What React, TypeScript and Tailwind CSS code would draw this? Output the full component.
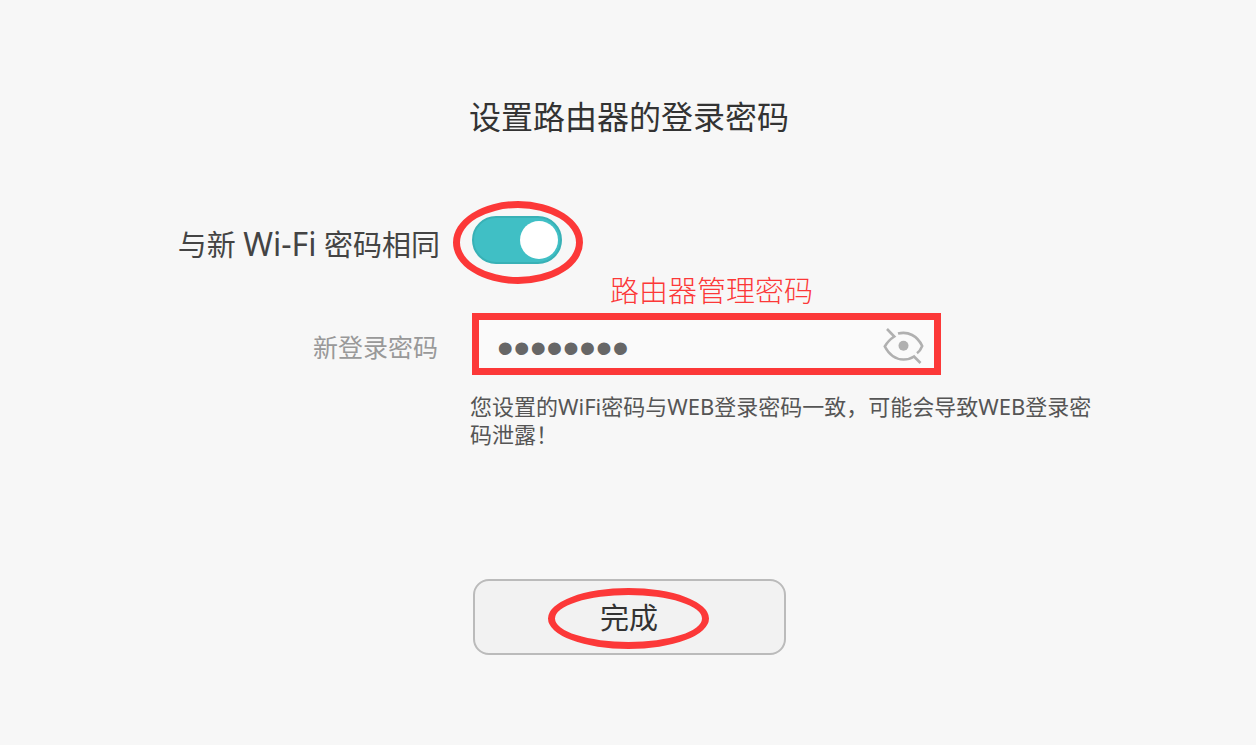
import { useState } from "react";

function EyeOffIcon() {
  return (
    <svg viewBox="0 0 44 40" className="h-10 w-11" fill="none" stroke="#b0b0b0" strokeWidth="2.6" aria-hidden="true">
      <path d="M6 5 L13.3 12.5 C9.5 15 6 18.5 3.8 22.5 C8 30.5 15 35.5 22.5 35.5 C26.5 35.5 30 34.5 33 32.5 L39.5 39" />
      <path d="M17 9.6 C27 6.8 36.5 12 41.2 22 C40 25 38.5 27.5 36 29.3" />
      <circle cx="22.5" cy="21.8" r="5" fill="#b0b0b0" stroke="none" />
    </svg>
  );
}

export default function App() {
  const [same, setSame] = useState(true);
  const [password, setPassword] = useState("12345678");
  const [visible, setVisible] = useState(false);

  return (
    <main className="min-h-screen bg-[#f7f7f7] pt-[93px] pb-[90px] pl-0.5 font-['Noto_Sans','Noto_Sans_CJK_SC',sans-serif] text-[#333]">
      <h1 className="text-center text-[32px] leading-[48px]">设置路由器的登录密码</h1>

      <form onSubmit={(e) => e.preventDefault()}>
        <div className="mx-auto mt-[75px] grid max-w-[930px] grid-cols-[276px_1fr] gap-x-[30px]">
          <label htmlFor="same" className="h-12 text-right text-[29px] leading-[56px] whitespace-nowrap text-[#444]">
            与新 <span className="text-[32px]">Wi-Fi</span> 密码相同
          </label>
          <div className="pl-0.5">
            <div className="relative h-12 w-[90px]">
              <input
                id="same"
                type="checkbox"
                role="switch"
                checked={same}
                onChange={(e) => setSame(e.target.checked)}
                className="peer block h-12 w-[90px] cursor-pointer appearance-none rounded-full border-2 border-[#bbb] bg-[#ccc] checked:border-[#38b1b6] checked:bg-[#40bfc5]"
              />
              <span className="pointer-events-none absolute top-[5px] left-1 size-[38px] rounded-full bg-white peer-checked:left-12" />
              <span className="pointer-events-none absolute -top-[15px] -left-[19px] h-[83px] w-[130px] rounded-[50%] border-[7px] border-[#fc3838]" />
            </div>
          </div>

          <p className="col-start-2 pt-1.5 pb-px pl-[140px] text-[29px] leading-[42px] font-light text-[#fc3838]">路由器管理密码</p>

          <label htmlFor="password" className="self-center pt-1.5 pr-0.5 text-right text-[25px] leading-9 text-[#999]">
            新登录密码
          </label>
          <div className="pl-0.5">
            <div className="flex h-[62px] max-w-[469px] items-center border-[7px] border-[#fc3838] bg-[#fafafa] pr-[9px] pl-[18px]">
              <input
                id="password"
                type={visible ? "text" : "password"}
                value={password}
                onChange={(e) => setPassword(e.target.value)}
                className="h-12 min-w-0 flex-1 bg-transparent pt-1.5 font-['Liberation_Sans',sans-serif] text-[47px] leading-10 text-[#666] outline-none"
              />
              <button type="button" aria-label="显示密码" onClick={() => setVisible(!visible)} className="cursor-pointer">
                <EyeOffIcon />
              </button>
            </div>
          </div>

          <p className="col-start-2 mt-[17px] text-[22px] leading-7 text-[#555]">
            您设置的WiFi密码与WEB登录密码一致，可能会导致WEB登录密码泄露！
          </p>
        </div>

        <button
          type="submit"
          className="relative mx-auto mt-[131px] block h-[76px] w-[313px] cursor-pointer rounded-2xl border-2 border-[#bbb] bg-[#f2f2f2] pt-0.5 text-[29px] leading-[70px]"
        >
          完成
          <span className="pointer-events-none absolute top-[7px] left-[73px] h-[61px] w-[161px] rounded-[50%] border-[7px] border-[#fc3838]" />
        </button>
      </form>
    </main>
  );
}
